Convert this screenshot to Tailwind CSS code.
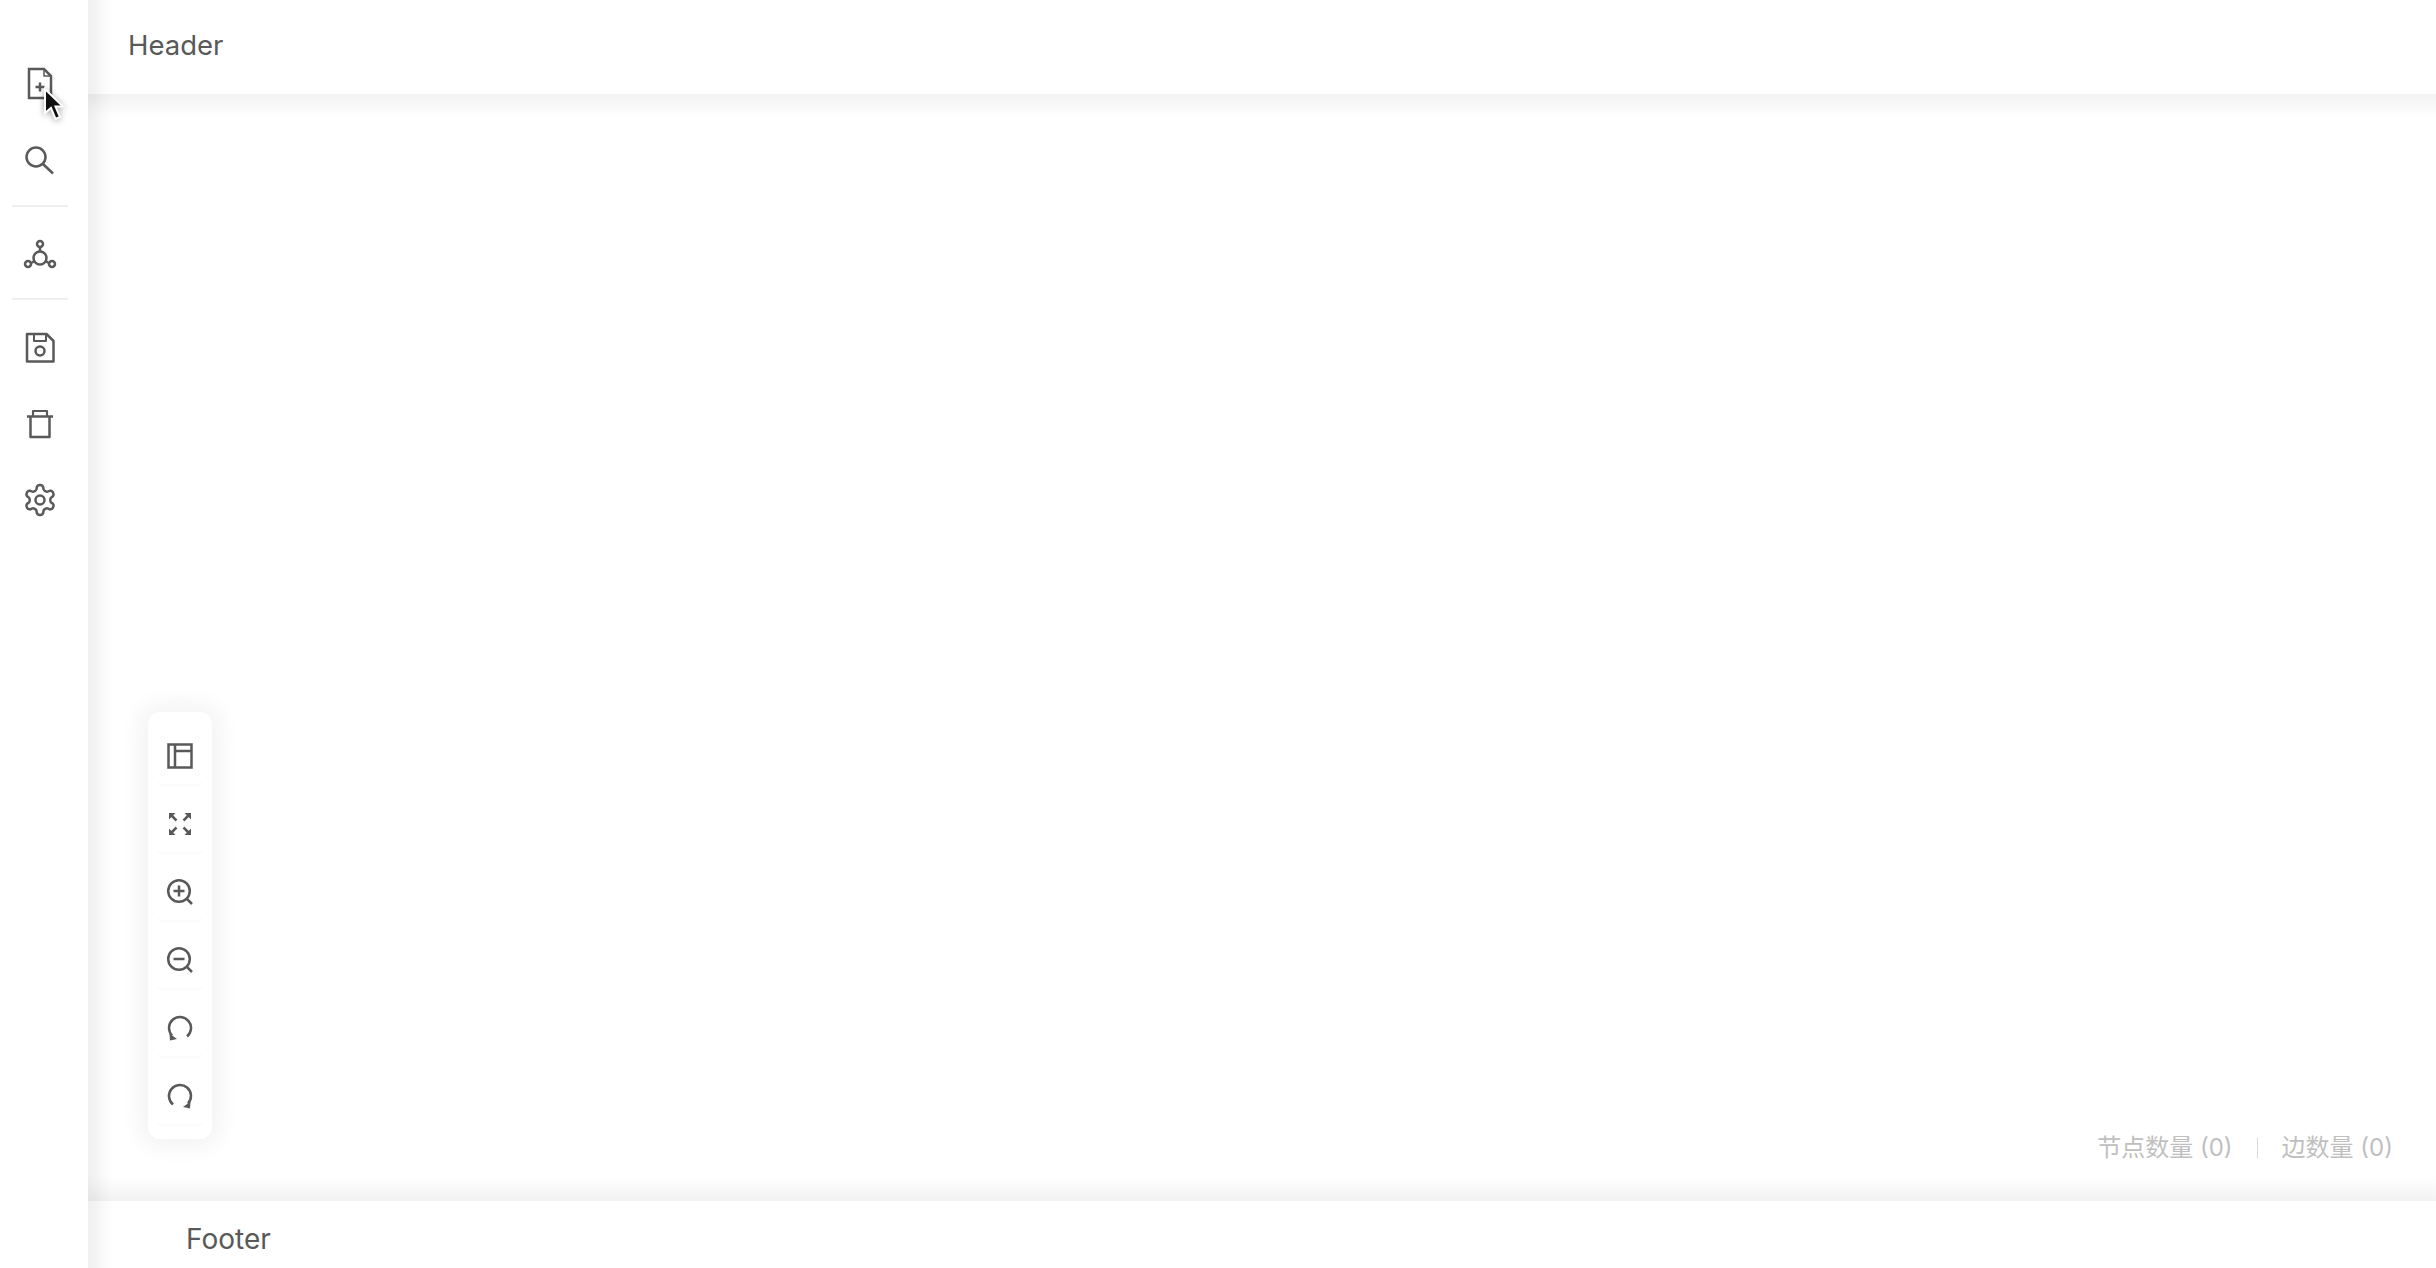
<!doctype html>
<html lang="zh">
<head>
<meta charset="utf-8">
<title>Graph editor</title>
<script src="https://cdn.jsdelivr.net/npm/@tailwindcss/browser@4"></script>
</head>
<body class="bg-white font-['Inter','Noto_Sans_CJK_SC',sans-serif] text-[#595959]">
<div class="relative flex h-[1268px] w-[2436px] overflow-hidden bg-white">
  <aside class="relative z-20 flex h-full w-[88px] shrink-0 flex-col items-center bg-white pt-[46px] pr-[8px] shadow-[0_0_16px_12px_rgba(0,0,0,0.065)]">
    <button class="flex h-[76px] w-full items-center justify-center">
      <svg class="h-[40px] w-[40px]" viewBox="0 0 40 40" fill="none" stroke="#595959" stroke-width="2.5"><path d="M9 5H24L31 12V34H9Z"/><path d="M24 5V12H31" stroke-width="1.5"/><path d="M20 18.5V27.5M15.5 23H24.5"/></svg>
    </button>
    <button class="flex h-[76px] w-full items-center justify-center">
      <svg class="h-[40px] w-[40px]" viewBox="0 0 40 40" fill="none" stroke="#595959" stroke-width="2.5"><circle cx="16" cy="17" r="9.5"/><path d="M23 24L33 33.5"/></svg>
    </button>
    <div class="mt-[7px] mb-[9px] h-[2px] w-[56px] bg-[#efefef]"></div>
    <button class="flex h-[76px] w-full items-center justify-center">
      <svg class="h-[40px] w-[40px]" viewBox="0 0 40 40" fill="none" stroke="#595959" stroke-width="2.5"><circle cx="20" cy="10" r="3"/><circle cx="8" cy="30" r="3"/><circle cx="32" cy="30" r="3"/><circle cx="20" cy="24" r="6.5"/><path d="M20 13V17.5M11 29L14 27.5M29 29L26 27.5"/></svg>
    </button>
    <div class="mt-[6px] mb-[10px] h-[2px] w-[56px] bg-[#efefef]"></div>
    <button class="flex h-[76px] w-full items-center justify-center">
      <svg class="h-[40px] w-[40px]" viewBox="0 0 40 40" fill="none" stroke="#595959" stroke-width="2.5" stroke-linejoin="round"><path d="M7 6H26.5L33.5 13V33.5H7Z"/><path d="M14 6V13H26V6" stroke-width="2"/><circle cx="20" cy="23" r="4.5"/></svg>
    </button>
    <button class="flex h-[76px] w-full items-center justify-center">
      <svg class="h-[40px] w-[40px]" viewBox="0 0 40 40" fill="none" stroke="#595959" stroke-width="2.5" stroke-linejoin="round"><path d="M7 12.5H33"/><path d="M13 12V7H27V12" stroke-width="2.2"/><path d="M10.5 13V33H29.5V13"/></svg>
    </button>
    <button class="flex h-[76px] w-full items-center justify-center">
      <svg class="h-[36px] w-[36px]" viewBox="0 0 24 24" fill="none" stroke="#595959" stroke-width="1.67" stroke-linejoin="round"><path d="M12.22 2h-.44a2 2 0 0 0-2 2v.18a2 2 0 0 1-1 1.73l-.43.25a2 2 0 0 1-2 0l-.15-.08a2 2 0 0 0-2.73.73l-.22.38a2 2 0 0 0 .73 2.73l.15.1a2 2 0 0 1 1 1.72v.51a2 2 0 0 1-1 1.74l-.15.09a2 2 0 0 0-.73 2.73l.22.38a2 2 0 0 0 2.73.73l.15-.08a2 2 0 0 1 2 0l.43.25a2 2 0 0 1 1 1.73V20a2 2 0 0 0 2 2h.44a2 2 0 0 0 2-2v-.18a2 2 0 0 1 1-1.73l.43-.25a2 2 0 0 1 2 0l.15.08a2 2 0 0 0 2.73-.73l.22-.39a2 2 0 0 0-.73-2.73l-.15-.08a2 2 0 0 1-1-1.74v-.5a2 2 0 0 1 1-1.74l.15-.09a2 2 0 0 0 .73-2.73l-.22-.38a2 2 0 0 0-2.73-.73l-.15.08a2 2 0 0 1-2 0l-.43-.25a2 2 0 0 1-1-1.73V4a2 2 0 0 0-2-2z"/><circle cx="12" cy="12" r="3"/></svg>
    </button>
  </aside>

  <main class="relative flex h-full min-w-0 flex-1 flex-col">
    <header class="relative z-10 flex h-[94px] shrink-0 items-center bg-white pb-[2px] pl-[40px] text-[27.5px] leading-none shadow-[0_0_16px_12px_rgba(0,0,0,0.055)]">Header</header>
    <section class="relative flex-1 bg-white">
      <div class="absolute top-[618px] left-[60px] flex w-[64px] flex-col items-center gap-[12px] rounded-[12px] bg-white pt-[16px] pb-[15px] shadow-[0_0_20px_10px_rgba(0,0,0,0.045)]">
        <button class="flex h-[56px] w-[48px] items-center justify-center rounded-[6px] shadow-[0_2px_2px_rgba(0,0,0,0.018)]">
          <svg class="h-[40px] w-[40px]" viewBox="0 0 40 40" fill="none" stroke="#595959" stroke-width="2.5"><rect x="8.5" y="8.5" width="23" height="23"/><path d="M15 8.5V31.5M15 15H31.5"/></svg>
        </button>
        <button class="flex h-[56px] w-[48px] items-center justify-center rounded-[6px] shadow-[0_2px_2px_rgba(0,0,0,0.018)]">
          <svg class="h-[40px] w-[40px]" viewBox="0 0 40 40" fill="none" stroke="#595959" stroke-width="2.5"><path d="M10 10L16.5 16.5M30 10L23.5 16.5M10 30L16.5 23.5M30 30L23.5 23.5"/><g fill="#595959" stroke="none"><path d="M9 9H15.5L9 15.5Z"/><path d="M31 9H24.5L31 15.5Z"/><path d="M9 31H15.5L9 24.5Z"/><path d="M31 31H24.5L31 24.5Z"/></g></svg>
        </button>
        <button class="flex h-[56px] w-[48px] items-center justify-center rounded-[6px] shadow-[0_2px_2px_rgba(0,0,0,0.018)]">
          <svg class="h-[40px] w-[40px]" viewBox="0 0 40 40" fill="none" stroke="#595959" stroke-width="2.5"><circle cx="19" cy="19" r="10.8"/><path d="M19 13.5V24.5M13.5 19H24.5M27 27L32 32"/></svg>
        </button>
        <button class="flex h-[56px] w-[48px] items-center justify-center rounded-[6px] shadow-[0_2px_2px_rgba(0,0,0,0.018)]">
          <svg class="h-[40px] w-[40px]" viewBox="0 0 40 40" fill="none" stroke="#595959" stroke-width="2.5"><circle cx="19" cy="19" r="10.8"/><path d="M13.5 19H24.5M27 27L32 32"/></svg>
        </button>
        <button class="flex h-[56px] w-[48px] items-center justify-center rounded-[6px] shadow-[0_2px_2px_rgba(0,0,0,0.018)]">
          <svg class="h-[40px] w-[40px]" viewBox="0 0 40 40" fill="none" stroke="#595959" stroke-width="2.5"><path d="M27 28.5A11 11 0 1 0 12 27.5"/><path d="M9.5 25.5L17 31L10 32.5Z" fill="#595959" stroke="none"/></svg>
        </button>
        <button class="flex h-[56px] w-[48px] items-center justify-center rounded-[6px] shadow-[0_2px_2px_rgba(0,0,0,0.018)]">
          <svg class="h-[40px] w-[40px]" viewBox="0 0 40 40" fill="none" stroke="#595959" stroke-width="2.5"><path d="M13 28.5A11 11 0 1 1 28 27.5"/><path d="M30.5 25.5L23 31L30 32.5Z" fill="#595959" stroke="none"/></svg>
        </button>
      </div>
      <div class="absolute right-[43px] bottom-[41px] flex items-center text-[24px] leading-none text-[#bfbfbf]">
        <span>节点数量 (0)</span>
        <span class="mx-[24px] h-[20px] w-[1px] bg-[#d9d9d9]"></span>
        <span>边数量 (0)</span>
      </div>
    </section>
    <footer class="relative z-10 flex h-[67px] shrink-0 items-center bg-white pt-[8px] pl-[98px] text-[28px] leading-none shadow-[0_0_16px_12px_rgba(0,0,0,0.055)]">Footer</footer>
  </main>

  <svg class="absolute top-[86px] left-[40px] z-30 h-[40px] w-[30px] drop-shadow-[0_1px_3px_rgba(0,0,0,0.35)]" viewBox="0 0 30 40"><path d="M5 3V27L11 22L15.5 33L20 31L15.5 20.5H23Z" fill="#111" stroke="#fff" stroke-width="2"/></svg>
</div>
</body>
</html>
